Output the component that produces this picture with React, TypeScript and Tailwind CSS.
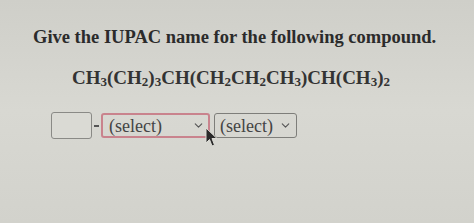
import { ChevronDown } from 'lucide-react';

const Sub = ({ children }: { children: React.ReactNode }) => (
    <sub className="text-[13px] relative top-[2px] align-baseline">{children}</sub>
);

const App = () => {
    return (
        <div className="w-[474px] h-[223px] overflow-hidden bg-linear-to-b from-[#cfcfc9] via-[#d8d8d2] to-[#d2d2cc] text-[#2b2b2b] font-['Liberation_Serif',serif] relative">
            <div className="pl-[33px] pt-[26px] text-[18.5px] font-bold leading-[22px]">
                Give the IUPAC name for the following compound.
            </div>
            <div className="pl-[72px] pt-[19px] text-[19px] font-bold leading-[22px] text-[#333]">
                CH<Sub>3</Sub>(CH<Sub>2</Sub>)<Sub>3</Sub>CH(CH<Sub>2</Sub>CH<Sub>2</Sub>CH<Sub>3</Sub>)CH(CH<Sub>3</Sub>)<Sub>2</Sub>
            </div>
            <div className="flex items-center pl-[51px] pt-[23px]">
                <div className="w-[41px] h-[27px] border border-[#8a8a86] rounded-[3px] bg-[#dadad4]"></div>
                <div className="w-[5px] h-[2px] bg-[#555] mx-[2px]"></div>
                <div className="relative flex items-center justify-between w-[109px] h-[25px] border-2 border-[#c9838d] rounded-[3px] pl-[6px] pr-[3px] text-[18px] text-[#444]">
                    <span className="leading-none">(select)</span>
                    <ChevronDown size={13} strokeWidth={2} className="text-[#555]" />
                    <svg className="absolute left-[102px] top-[12px]" width="14" height="22" viewBox="0 0 14 22">
                        <path d="M1 1 L1 16 L4.5 12.5 L7 19 L9.5 18 L7 11.5 L12 11.5 Z" fill="#2a2a2a" stroke="#dcdcd6" strokeWidth="1" />
                    </svg>
                </div>
                <div className="flex items-center justify-between w-[83px] h-[25px] border border-[#7e7e7a] rounded-[3px] ml-[4px] pl-[5px] pr-[4px] text-[18px] text-[#444]">
                    <span className="leading-none">(select)</span>
                    <ChevronDown size={13} strokeWidth={2} className="text-[#555]" />
                </div>
            </div>
        </div>
    );
};

export default App;
